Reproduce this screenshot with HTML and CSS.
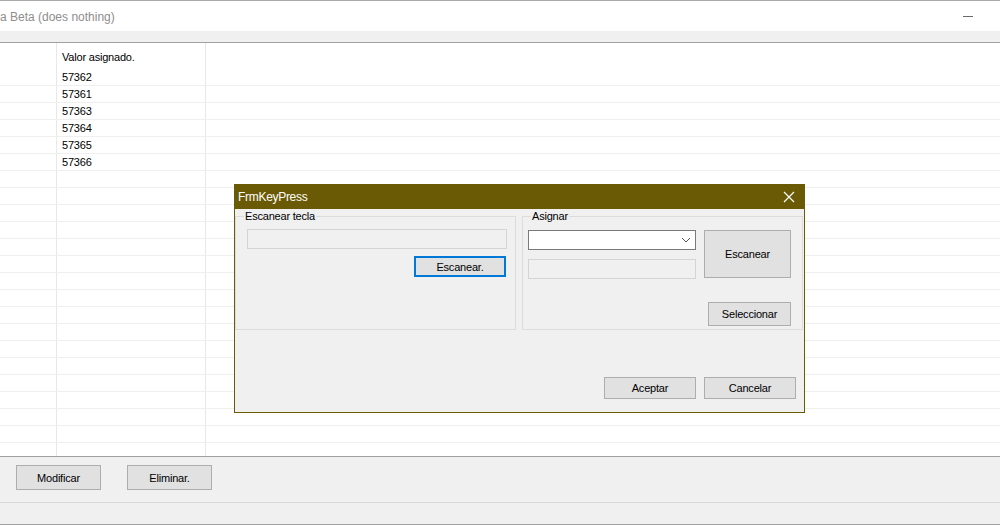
FILE: index.html
```html
<!DOCTYPE html>
<html lang="es">
<head>
<meta charset="utf-8">
<title>FrmKeyPress</title>
<link rel="stylesheet" href="styles.css">
</head>
<body>
<div class="app">
  <div class="titlebar">
    <span class="app-title">a Beta (does nothing)</span>
    <span class="minimize"></span>
  </div>
  <div class="band"></div>
  <div class="grid">
    <div class="row head"><div class="c1"></div><div class="c2">Valor asignado.</div><div class="c3"></div></div>
    <div class="row"><div class="c1"></div><div class="c2">57362</div><div class="c3"></div></div>
    <div class="row"><div class="c1"></div><div class="c2">57361</div><div class="c3"></div></div>
    <div class="row"><div class="c1"></div><div class="c2">57363</div><div class="c3"></div></div>
    <div class="row"><div class="c1"></div><div class="c2">57364</div><div class="c3"></div></div>
    <div class="row"><div class="c1"></div><div class="c2">57365</div><div class="c3"></div></div>
    <div class="row"><div class="c1"></div><div class="c2">57366</div><div class="c3"></div></div>
    <div class="row"><div class="c1"></div><div class="c2"></div><div class="c3"></div></div>
    <div class="row"><div class="c1"></div><div class="c2"></div><div class="c3"></div></div>
    <div class="row"><div class="c1"></div><div class="c2"></div><div class="c3"></div></div>
    <div class="row"><div class="c1"></div><div class="c2"></div><div class="c3"></div></div>
    <div class="row"><div class="c1"></div><div class="c2"></div><div class="c3"></div></div>
    <div class="row"><div class="c1"></div><div class="c2"></div><div class="c3"></div></div>
    <div class="row"><div class="c1"></div><div class="c2"></div><div class="c3"></div></div>
    <div class="row"><div class="c1"></div><div class="c2"></div><div class="c3"></div></div>
    <div class="row"><div class="c1"></div><div class="c2"></div><div class="c3"></div></div>
    <div class="row"><div class="c1"></div><div class="c2"></div><div class="c3"></div></div>
    <div class="row"><div class="c1"></div><div class="c2"></div><div class="c3"></div></div>
    <div class="row"><div class="c1"></div><div class="c2"></div><div class="c3"></div></div>
    <div class="row"><div class="c1"></div><div class="c2"></div><div class="c3"></div></div>
    <div class="row"><div class="c1"></div><div class="c2"></div><div class="c3"></div></div>
    <div class="row"><div class="c1"></div><div class="c2"></div><div class="c3"></div></div>
    <div class="row"><div class="c1"></div><div class="c2"></div><div class="c3"></div></div>
    <div class="row"><div class="c1"></div><div class="c2"></div><div class="c3"></div></div>
  </div>
  <div class="bottom">
    <div class="bottom-buttons">
      <button class="btn btn-main">Modificar</button>
      <button class="btn btn-main">Eliminar.</button>
    </div>
    <div class="status"></div>
  </div>

  <div class="dialog">
    <div class="dlg-title">
      <span>FrmKeyPress</span>
      <svg class="close" width="12" height="12" viewBox="0 0 12 12"><path d="M1 1 L11 11 M11 1 L1 11" stroke="#ffffff" stroke-width="1.2" fill="none"/></svg>
    </div>
    <div class="dlg-body">
      <div class="groups">
        <div class="group g1">
          <span class="group-label">Escanear tecla</span>
          <div class="textbox tb1"></div>
          <button class="btn btn-focus">Escanear.</button>
        </div>
        <div class="group g2">
          <span class="group-label">Asignar</span>
          <div class="g2-grid">
            <div class="g2-left">
              <div class="combo">
                <svg width="10" height="6" viewBox="0 0 10 6"><path d="M1 1 L5 5 L9 1" stroke="#555" stroke-width="1" fill="none"/></svg>
              </div>
              <div class="textbox tb2"></div>
            </div>
            <button class="btn btn-big">Escanear</button>
          </div>
          <button class="btn btn-sel">Seleccionar</button>
        </div>
      </div>
      <div class="dlg-actions">
        <button class="btn btn-act">Aceptar</button>
        <button class="btn btn-act">Cancelar</button>
      </div>
    </div>
  </div>
</div>
</body>
</html>
```

FILE: styles.css
```css
html, body {
  margin: 0;
  padding: 0;
  background: #ffffff;
}
body {
  font-family: "Liberation Sans", Arial, sans-serif;
  font-size: 11px;
  color: #000;
}
.app {
  position: relative;
  width: 1000px;
  height: 525px;
  display: flex;
  flex-direction: column;
  overflow: hidden;
}
.titlebar {
  height: 30px;
  border-top: 1px solid #a9a9a9;
  background: #ffffff;
  display: flex;
  align-items: center;
  justify-content: space-between;
  flex: none;
}
.app-title {
  font-size: 12px;
  color: #8e8e8e;
  margin-left: 0;
  margin-top: 1px;
}
.minimize {
  width: 10px;
  height: 1px;
  background: #6a6a6a;
  margin-right: 27px;
}
.band {
  height: 11px;
  background: #f0f0f0;
  border-bottom: 1px solid #a0a0a0;
  flex: none;
}
.grid {
  flex: 1;
  background: #ffffff;
  border-bottom: 1px solid #a0a0a0;
  overflow: hidden;
  display: flex;
  flex-direction: column;
}
.row {
  display: flex;
  height: 17px;
  flex: none;
  box-sizing: border-box;
  border-bottom: 1px solid #efefef;
  line-height: 16px;
}
.row.head {
  height: 26px;
  border-bottom: none;
  line-height: 26px;
}
.c1 {
  width: 56px;
  border-right: 1px solid #e8e8e8;
  flex: none;
}
.c2 {
  width: 149px;
  border-right: 1px solid #e8e8e8;
  padding-left: 5px;
  box-sizing: border-box;
  flex: none;
  letter-spacing: -0.2px;
}
.head .c2 {
  padding-top: 1px;
}
.c3 {
  flex: 1;
}
.bottom {
  height: 68px;
  flex: none;
  background: #f0f0f0;
  box-sizing: border-box;
  padding-top: 8px;
  display: flex;
  flex-direction: column;
}
.bottom-buttons {
  display: flex;
  gap: 26px;
  padding-left: 16px;
}
.status {
  margin-top: 12px;
  border-top: 1px solid #d9d9d9;
  border-bottom: 1px solid #a0a0a0;
  height: 21px;
}
.btn {
  font-family: "Liberation Sans", Arial, sans-serif;
  font-size: 11px;
  letter-spacing: -0.2px;
  color: #000;
  background: #e1e1e1;
  border: 1px solid #adadad;
  padding: 0;
  margin: 0;
  box-sizing: border-box;
}
.btn-main {
  width: 85px;
  height: 25px;
}

/* dialog window */
.dialog {
  position: absolute;
  left: 234px;
  top: 184px;
  width: 571px;
  height: 229px;
  box-sizing: border-box;
  border: 1px solid #6b5a05;
  background: #f0f0f0;
  display: flex;
  flex-direction: column;
}
.dlg-title {
  height: 24px;
  background: #6b5a05;
  color: #ffffff;
  font-size: 12px;
  display: flex;
  align-items: center;
  justify-content: space-between;
  padding-left: 3px;
  padding-right: 9px;
  flex: none;
}
.dlg-title span {
  letter-spacing: -0.3px;
}
.dlg-body {
  flex: 1;
  padding-top: 7px;
  display: flex;
  flex-direction: column;
}
.groups {
  display: flex;
  gap: 6px;
}
.group {
  position: relative;
  width: 281px;
  height: 114px;
  box-sizing: border-box;
  border: 1px solid #dcdcdc;
}
.group-label {
  position: absolute;
  top: -7px;
  left: 8px;
  padding: 0 1px;
  background: #f0f0f0;
  line-height: 13px;
  letter-spacing: -0.2px;
}
.g1 {
  display: flex;
  flex-direction: column;
  align-items: flex-end;
  padding: 12px 9px 0 11px;
}
.textbox {
  box-sizing: border-box;
  background: #f0f0f0;
  border: 1px solid #d4d4d4;
}
.tb1 {
  width: 260px;
  height: 20px;
  align-self: flex-start;
}
.btn-focus {
  width: 92px;
  height: 21px;
  margin-top: 7px;
  border: 2px solid #0078d7;
}
.g2 {
  padding: 13px 11px 0 5px;
  display: flex;
  flex-direction: column;
  align-items: flex-end;
}
.g2-grid {
  display: flex;
  gap: 8px;
  align-self: flex-start;
}
.g2-left {
  display: flex;
  flex-direction: column;
  gap: 9px;
}
.combo {
  width: 168px;
  height: 20px;
  box-sizing: border-box;
  background: #ffffff;
  border: 1px solid #7a7a7a;
  display: flex;
  align-items: center;
  justify-content: flex-end;
  padding-right: 4px;
}
.tb2 {
  width: 168px;
  height: 20px;
}
.btn-big {
  width: 87px;
  height: 48px;
}
.btn-sel {
  width: 83px;
  height: 24px;
  margin-top: 23px;
}
.dlg-actions {
  display: flex;
  justify-content: flex-end;
  gap: 8px;
  padding-right: 8px;
  margin-top: 47px;
}
.btn-act {
  width: 92px;
  height: 22px;
}
```
